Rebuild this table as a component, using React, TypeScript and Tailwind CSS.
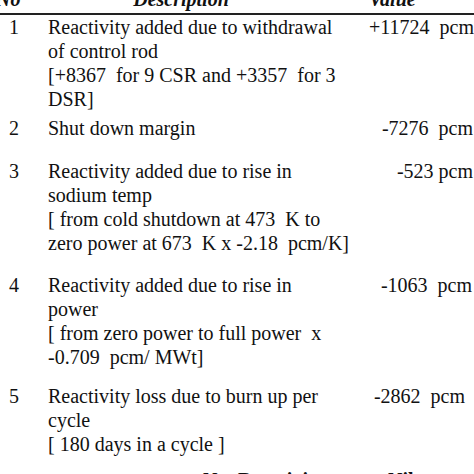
import React from "react";

type Row = { no: string; lines: string[]; value: string; pb: string; pr: string };

const rows: Row[] = [
  {
    no: "1",
    lines: [
      "Reactivity added due to withdrawal",
      "of control rod",
      "[+8367  for 9 CSR and +3357  for 3",
      "DSR]",
    ],
    value: "+11724  pcm",
    pb: "pb-[5px]",
    pr: "pr-0",
  },
  { no: "2", lines: ["Shut down margin"], value: "-7276  pcm", pb: "pb-[19px]", pr: "pr-[1px]" },
  {
    no: "3",
    lines: [
      "Reactivity added due to rise in",
      "sodium temp",
      "[ from cold shutdown at 473  K to",
      "zero power at 673  K x -2.18  pcm/K]",
    ],
    value: "-523 pcm",
    pb: "pb-[18px]",
    pr: "pr-[1px]",
  },
  {
    no: "4",
    lines: [
      "Reactivity added due to rise in",
      "power",
      "[ from zero power to full power  x",
      "-0.709  pcm/ MWt]",
    ],
    value: "-1063  pcm",
    pb: "pb-[15px]",
    pr: "pr-[2px]",
  },
  {
    no: "5",
    lines: ["Reactivity loss due to burn up per", "cycle", "[ 180 days in a cycle ]"],
    value: "-2862  pcm",
    pb: "pb-[12px]",
    pr: "pr-[9px]",
  },
];

export default function App() {
  return (
    <div className="w-[474px] h-[474px] overflow-hidden bg-white text-[#111] font-['Liberation_Serif',serif] text-[20px] leading-[24px]">
      <div className="-mt-[13px]">
        <div className="flex items-start italic font-bold pb-[2px] border-b-2 border-[#222]">
          <div className="w-[48px] -ml-[4px]">No</div>
          <div className="w-[274px] text-center">Description</div>
          <div className="flex-1 pl-[51px]">Value</div>
        </div>
        {rows.map((r) => (
          <div key={r.no} className={`flex items-start ${r.pb}`}>
            <div className="w-[48px] shrink-0 pl-[9px]">{r.no}</div>
            <div className="w-[320px] shrink-0 whitespace-pre">
              {r.lines.map((l, i) => (
                <div key={i}>{l}</div>
              ))}
            </div>
            <div className={`flex-1 text-right whitespace-pre ${r.pr}`}>{r.value}</div>
          </div>
        ))}
        <div className="flex items-start font-bold">
          <div className="w-[203px] shrink-0" />
          <div className="w-[185px] shrink-0">Net Reactivity</div>
          <div className="flex-1">Nil</div>
        </div>
      </div>
    </div>
  );
}
